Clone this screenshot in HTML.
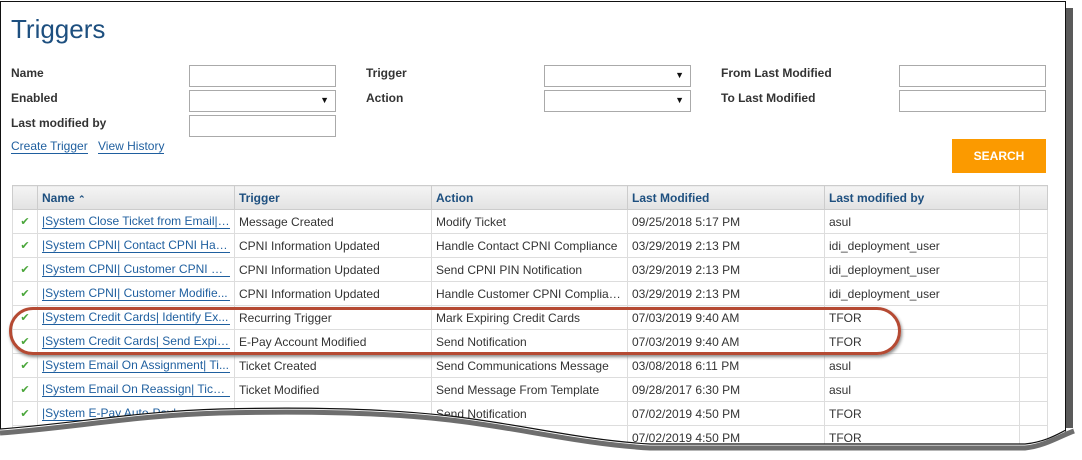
<!DOCTYPE html>
<html style="overflow:hidden;height:460px"><head><meta charset="utf-8"><style>
*{margin:0;padding:0;box-sizing:border-box}
body{width:1082px;height:460px;overflow:hidden;background:#fff;font-family:"Liberation Sans",sans-serif;font-size:12px;color:#333;position:relative}
.page{position:absolute;left:0;top:1px;width:1066px;height:445px;border:1px solid #111;border-bottom:none;background:#fff}
.shadow{position:absolute;left:1066px;top:8px;width:7px;height:420px;background:#5a5a5a}
h1{position:absolute;left:11px;top:14px;font-size:26px;font-weight:normal;color:#1d4f7f}
.lbl{position:absolute;font-weight:bold;font-size:12px;color:#333}
.inp{position:absolute;width:147px;height:22px;border:1px solid #aaa;background:#fff}
.sel:after{content:"▼";position:absolute;right:6px;top:4px;font-size:9px;color:#111}
.lnk{position:absolute;top:140px;color:#1f5f9f;border-bottom:1px solid #1f5f9f;line-height:13px}
.btn{position:absolute;left:952px;top:139px;width:94px;height:34px;background:#fb9a00;color:#fff;font-weight:bold;text-align:center;line-height:34px;font-size:12px}
.tw{position:absolute;left:0;top:0;width:1082px;height:446px;overflow:hidden}
table{position:absolute;left:12px;top:185px;border-collapse:collapse;table-layout:fixed;width:1035px}
td,th{border:1px solid #ddd;height:24px;padding:0 4px;white-space:nowrap;overflow:hidden;text-overflow:ellipsis;text-align:left;color:#333;font-size:12px}
th{background:linear-gradient(#f4f4f4,#e2e2e2);color:#1d4f7f;font-weight:bold;border-color:#ccc}
td.c{color:#4aa63a;text-align:center;font-size:11px}
td.n span{display:block;color:#1f5f9f;border-bottom:1px solid #1f5f9f;overflow:hidden;text-overflow:ellipsis;line-height:14px}
.oval{position:absolute;left:9px;top:307px;width:892px;height:48px;border:3px solid #b54a33;border-radius:24px;box-shadow:1px 2px 3px #888}
svg{position:absolute;left:0;top:0}
</style></head><body>
<div class="page"></div>
<div class="shadow"></div>
<h1>Triggers</h1>
<div class="lbl" style="left:11px;top:66px">Name</div>
<div class="lbl" style="left:11px;top:91px">Enabled</div>
<div class="lbl" style="left:11px;top:116px">Last modified by</div>
<div class="inp" style="left:189px;top:65px"></div>
<div class="inp sel" style="left:189px;top:90px"></div>
<div class="inp" style="left:189px;top:115px"></div>
<div class="lbl" style="left:366px;top:66px">Trigger</div>
<div class="lbl" style="left:366px;top:91px">Action</div>
<div class="inp sel" style="left:544px;top:65px"></div>
<div class="inp sel" style="left:544px;top:90px"></div>
<div class="lbl" style="left:721px;top:66px">From Last Modified</div>
<div class="lbl" style="left:721px;top:91px">To Last Modified</div>
<div class="inp" style="left:899px;top:65px"></div>
<div class="inp" style="left:899px;top:90px"></div>
<div class="lnk" style="left:11px">Create Trigger</div>
<div class="lnk" style="left:98px">View History</div>
<div class="btn">SEARCH</div>
<div class="tw">
<table>
<colgroup><col style="width:25px"><col style="width:197px"><col style="width:197px"><col style="width:196px"><col style="width:197px"><col style="width:195px"><col style="width:28px"></colgroup>
<tr><th></th><th>Name <span style="font-size:9px">⌃</span></th><th>Trigger</th><th>Action</th><th>Last Modified</th><th>Last modified by</th><th></th></tr>
<tr><td class="c">✔</td><td class="n"><span>|System Close Ticket from Email| ...</span></td><td>Message Created</td><td>Modify Ticket</td><td>09/25/2018 5:17 PM</td><td>asul</td><td></td></tr>
<tr><td class="c">✔</td><td class="n"><span>|System CPNI| Contact CPNI Han...</span></td><td>CPNI Information Updated</td><td>Handle Contact CPNI Compliance</td><td>03/29/2019 2:13 PM</td><td>idi_deployment_user</td><td></td></tr>
<tr><td class="c">✔</td><td class="n"><span>|System CPNI| Customer CPNI Pl...</span></td><td>CPNI Information Updated</td><td>Send CPNI PIN Notification</td><td>03/29/2019 2:13 PM</td><td>idi_deployment_user</td><td></td></tr>
<tr><td class="c">✔</td><td class="n"><span>|System CPNI| Customer Modifie...</span></td><td>CPNI Information Updated</td><td>Handle Customer CPNI Complian...</td><td>03/29/2019 2:13 PM</td><td>idi_deployment_user</td><td></td></tr>
<tr><td class="c">✔</td><td class="n"><span>|System Credit Cards| Identify Ex...</span></td><td>Recurring Trigger</td><td>Mark Expiring Credit Cards</td><td>07/03/2019 9:40 AM</td><td>TFOR</td><td></td></tr>
<tr><td class="c">✔</td><td class="n"><span>|System Credit Cards| Send Expiri...</span></td><td>E-Pay Account Modified</td><td>Send Notification</td><td>07/03/2019 9:40 AM</td><td>TFOR</td><td></td></tr>
<tr><td class="c">✔</td><td class="n"><span>|System Email On Assignment| Ti...</span></td><td>Ticket Created</td><td>Send Communications Message</td><td>03/08/2018 6:11 PM</td><td>asul</td><td></td></tr>
<tr><td class="c">✔</td><td class="n"><span>|System Email On Reassign| Ticke...</span></td><td>Ticket Modified</td><td>Send Message From Template</td><td>09/28/2017 6:30 PM</td><td>asul</td><td></td></tr>
<tr><td class="c">✔</td><td class="n"><span>|System E-Pay Auto-Pay| ...</span></td><td>E-Pay Account Modified</td><td>Send Notification</td><td>07/02/2019 4:50 PM</td><td>TFOR</td><td></td></tr>
<tr><td class="c">✔</td><td class="n"><span>|System E-Pay Auto-Pay| ...</span></td><td>E-Pay Account Modified</td><td>Send Notification</td><td>07/02/2019 4:50 PM</td><td>TFOR</td><td></td></tr>
</table>
</div>
<div class="oval"></div>
<svg width="1082" height="460" viewBox="0 0 1082 460">
<path d="M0,429 C70,424 140,411 220,409 C300,407 380,408 450,416 C520,424 580,440 650,444 L1025,444 C1045,442 1060,432 1082,426 L1082,460 L0,460Z" fill="#fff"/>
<path d="M0,433 C70,428 140,415 220,413 C300,411 380,412 450,420 C520,428 580,444 650,448 L1025,448 C1045,446 1060,436 1074,431" fill="none" stroke="#555" stroke-width="5" opacity="0.85"/>
<path d="M0,429 C70,424 140,411 220,409 C300,407 380,408 450,416 C520,424 580,440 650,444 L1025,444 C1045,442 1058,434 1066,430" fill="none" stroke="#111" stroke-width="1.2"/>
</svg>
</body></html>
